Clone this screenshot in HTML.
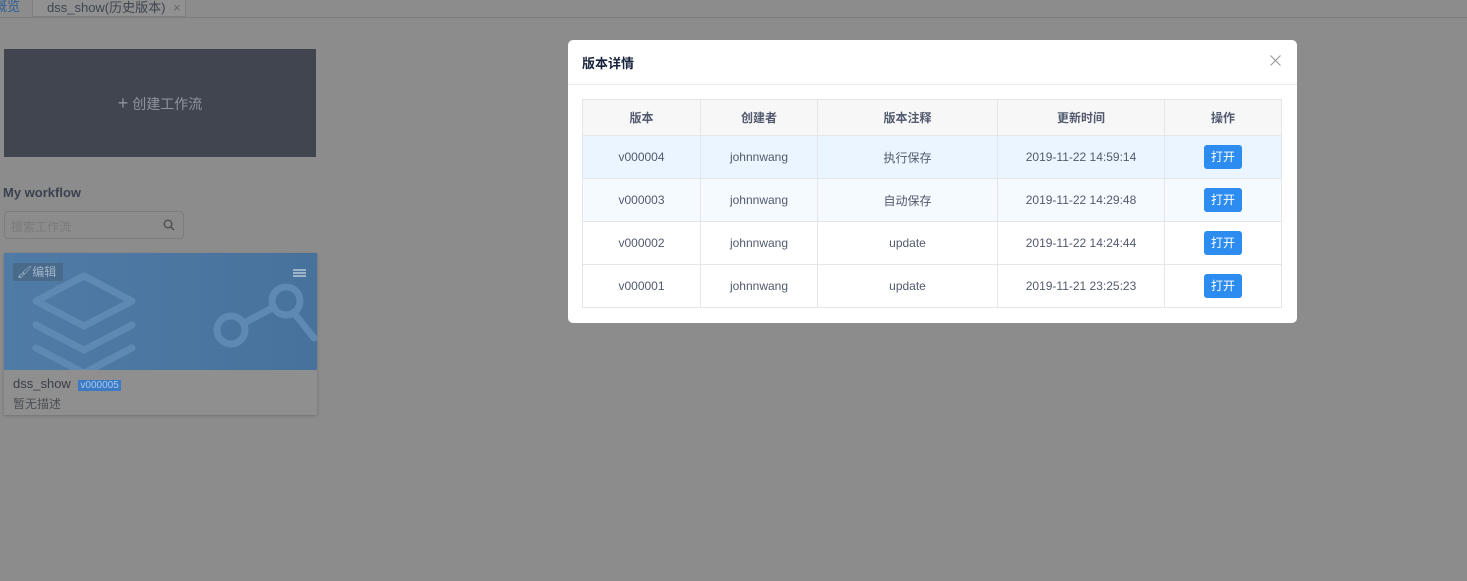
<!DOCTYPE html>
<html><head><meta charset="utf-8"><style>
*{box-sizing:border-box;margin:0;padding:0}
body{width:1467px;height:581px;overflow:hidden;background:#8c8c8c;font-family:"Liberation Sans","Noto Sans CJK SC",sans-serif;position:relative;color:#3a3f47}
.abs{position:absolute}
.tab{left:32px;top:-4px;width:154px;height:21px;background:#919191;border:1px solid #7f7f7f;border-top:none;font-size:13px;color:#3e4550;padding:1px 0 0 14px}
table{border-collapse:collapse;width:699px;table-layout:fixed}
td,th{border:1px solid #e4e6ea;text-align:center;font-size:12px;color:#515a6e;font-weight:normal;height:43px}
th{height:36px;background:#f7f7f7;font-weight:bold;color:#515a6e}
.btn{display:inline-block;background:#2d8cf0;color:#fff;width:38px;height:24px;line-height:24px;border-radius:3px;font-size:12px}
</style></head><body>
<div class="abs" style="left:0;top:17px;width:1467px;height:1px;background:#7f7f7f"></div>
<div class="abs" style="left:-6px;top:-4px;font-size:13px;color:#2b5f93">概览</div>
<div class="abs tab">dss_show(历史版本) <span style="color:#666;margin-left:4px">×</span></div>
<div class="abs" style="left:4px;top:49px;width:312px;height:108px;background:#41454f;color:#8f939b;font-size:14px;text-align:center;line-height:108px"><span style="font-size:18px">+</span> 创建工作流</div>
<div class="abs" style="left:3px;top:185px;font-size:13px;font-weight:bold;color:#3b4150">My workflow</div>
<div class="abs" style="left:4px;top:211px;width:180px;height:28px;border:1px solid #7d7d7d;border-radius:4px;font-size:12px;color:#7a7a7a;padding:6px 6px">搜索工作流
<svg class="abs" style="right:8px;top:7px" width="12" height="12" viewBox="0 0 12 12"><circle cx="5" cy="5" r="3.8" fill="none" stroke="#4c4c4c" stroke-width="1.3"/><path d="M8 8l3 3" stroke="#4c4c4c" stroke-width="1.3"/></svg></div>
<div class="abs" style="left:4px;top:253px;width:313px;height:162px;background:#8f8f8f;box-shadow:0 1px 3px rgba(0,0,0,.2)">
 <div style="height:117px;background:linear-gradient(90deg,#4f7ba6,#46729c);position:relative;overflow:hidden">
  <svg class="abs" style="left:0;top:0" width="313" height="117" viewBox="0 0 313 117">
   <g fill="none" stroke="#5f89b2" stroke-width="7" stroke-linecap="round" stroke-linejoin="round">
    <path d="M32 48l48-25 48 25-48 25z"/><path d="M32 72l48 25 48-25"/><path d="M32 95l48 25 48-25"/>
    <circle cx="227" cy="77" r="14"/><circle cx="282" cy="48" r="14"/><path d="M240 70l30-16M290 60l20 25"/>
   </g>
  </svg>
  <div class="abs" style="left:9px;top:10px;width:50px;height:18px;background:#4a6a8c;color:#9fb4c8;font-size:12px;line-height:18px;padding-left:4px">🖌编辑</div>
  <div class="abs" style="right:11px;top:16px;width:13px;height:8px;border-top:2px solid #9cb3c9;border-bottom:2px solid #9cb3c9"></div>
  <div class="abs" style="right:11px;top:19px;width:13px;height:2px;background:#9cb3c9"></div>
 </div>
 <div class="abs" style="left:9px;top:123px;font-size:13px;color:#3a3f47">dss_show <span style="background:#3c7bc4;color:#a8c8ee;font-size:10px;padding:0 2px;margin-left:4px">v000005</span></div>
 <div class="abs" style="left:9px;top:142px;font-size:12px;color:#4b4f55">暂无描述</div>
</div>
<div class="abs" style="left:568px;top:40px;width:729px;height:283px;background:#fff;border-radius:5px">
 <div style="height:45px;border-bottom:1px solid #e8eaec;font-size:13px;font-weight:bold;color:#17233d;padding:13px 0 0 14px">版本详情</div>
 <svg class="abs" style="right:16px;top:15px" width="11" height="11" viewBox="0 0 11 11"><path d="M0.5 0.5l10 10M10.5 0.5l-10 10" stroke="#999" stroke-width="1.1"/></svg>
 <div class="abs" style="left:14px;top:59px">
 <table><colgroup><col style="width:118px"><col style="width:117px"><col style="width:180px"><col style="width:167px"><col style="width:117px"></colgroup>
 <tr><th>版本</th><th>创建者</th><th>版本注释</th><th>更新时间</th><th>操作</th></tr>
 <tr style="background:#ebf5ff"><td>v000004</td><td>johnnwang</td><td>执行保存</td><td>2019-11-22 14:59:14</td><td><span class="btn">打开</span></td></tr>
 <tr style="background:#f5faff"><td>v000003</td><td>johnnwang</td><td>自动保存</td><td>2019-11-22 14:29:48</td><td><span class="btn">打开</span></td></tr>
 <tr><td>v000002</td><td>johnnwang</td><td>update</td><td>2019-11-22 14:24:44</td><td><span class="btn">打开</span></td></tr>
 <tr><td>v000001</td><td>johnnwang</td><td>update</td><td>2019-11-21 23:25:23</td><td><span class="btn">打开</span></td></tr>
 </table></div>
</div>
</body></html>
